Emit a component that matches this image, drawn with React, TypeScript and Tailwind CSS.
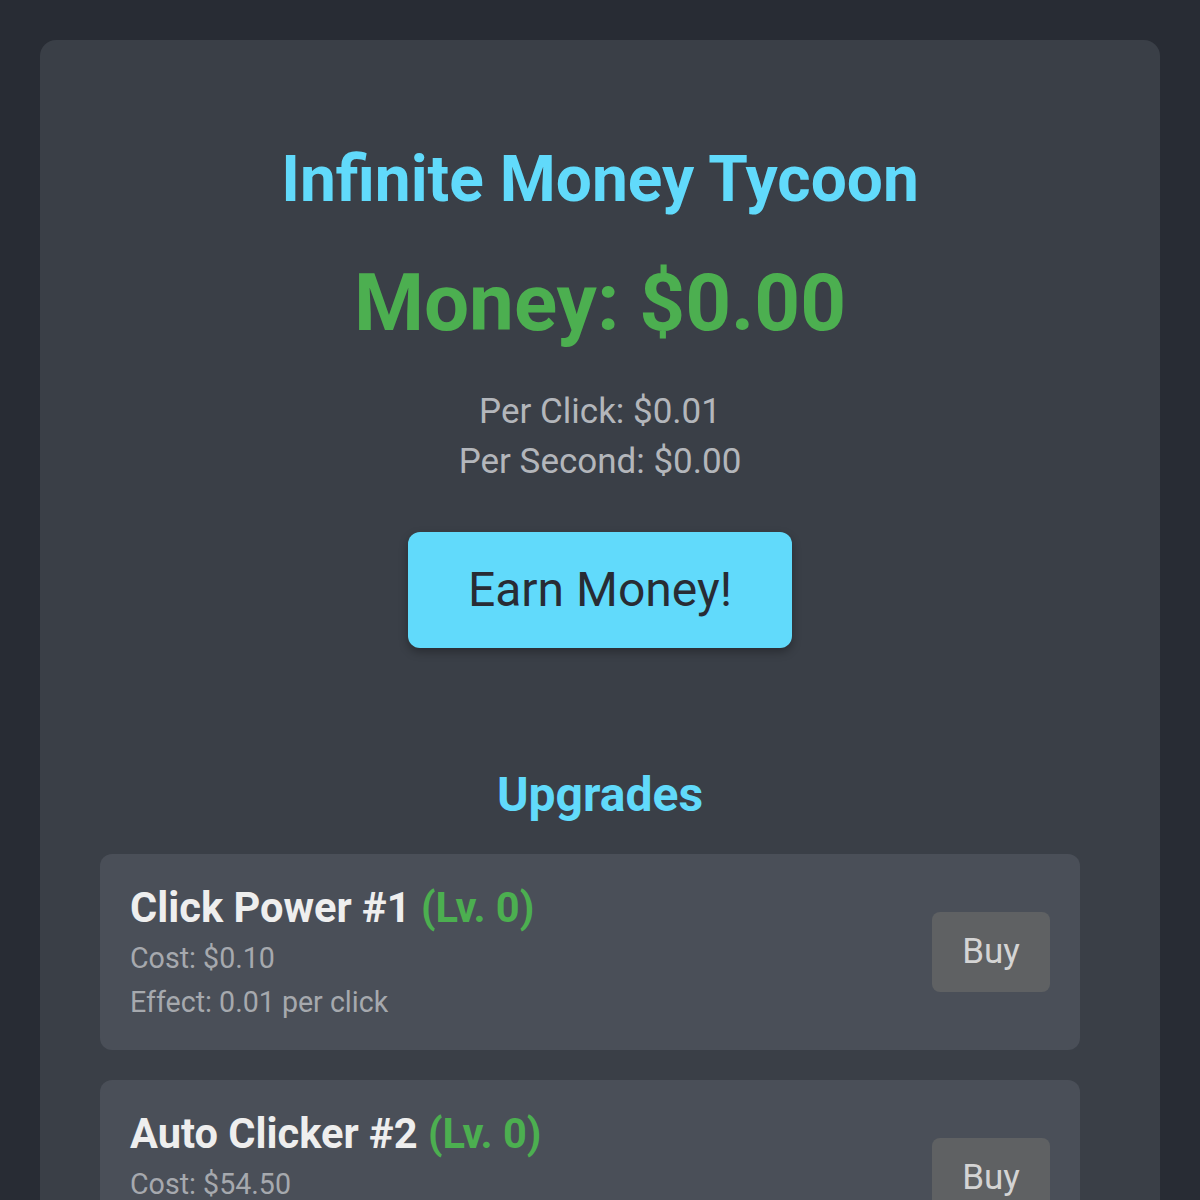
const upgrades = [
  { name: "Click Power #1", level: 0, cost: "$0.10", effect: "0.01 per click" },
  { name: "Auto Clicker #2", level: 0, cost: "$54.50", effect: "0.10 per second" },
];

export default function App() {
  return (
    <div className="min-h-[1200px] bg-[#282c34] px-10 pt-10 font-['Roboto',sans-serif]">
      <div className="rounded-2xl bg-[#3a3f47] px-[60px] pt-[102px] pb-10 text-center">
        <h1 className="text-[64px] font-bold leading-[76px] text-[#61dafb]">Infinite Money Tycoon</h1>
        <div className="mt-[37px] text-[80px] font-bold leading-[96px] text-[#4caf50]">Money: $0.00</div>
        <div className="mt-[36px] text-[35px] leading-[50px] text-[#b3b6bb]">
          <div>Per Click: $0.01</div>
          <div>Per Second: $0.00</div>
        </div>
        <button className="mt-[45px] h-[116px] w-[384px] rounded-xl bg-[#61dafb] text-[48px] text-[#282c34] shadow-[0_4px_10px_rgba(0,0,0,0.3)]">
          Earn Money!
        </button>
        <h2 className="mt-[118px] text-[48px] font-bold leading-[58px] text-[#61dafb]">Upgrades</h2>
        <div className="mt-[30px] flex w-[980px] flex-col gap-[30px]">
          {upgrades.map((u) => (
            <div key={u.name} className="flex h-[196px] items-start justify-between rounded-xl bg-[#4a4f58] px-[30px] pt-[29px] text-left">
              <div>
                <div className="text-[41.6px] font-bold leading-[50px] text-[#eeeeee]">
                  {u.name} <span className="text-[#4caf50]">(Lv. {u.level})</span>
                </div>
                <div className="mt-[3px] text-[28.6px] leading-[44px] text-[#a6a9ae]">Cost: {u.cost}</div>
                <div className="text-[28.6px] leading-[44px] text-[#a6a9ae]">Effect: {u.effect}</div>
              </div>
              <button className="mt-[29px] h-[80px] w-[118px] rounded-lg bg-[#5f6163] text-[35px] text-[#d4d4d4]">Buy</button>
            </div>
          ))}
        </div>
      </div>
    </div>
  );
}
